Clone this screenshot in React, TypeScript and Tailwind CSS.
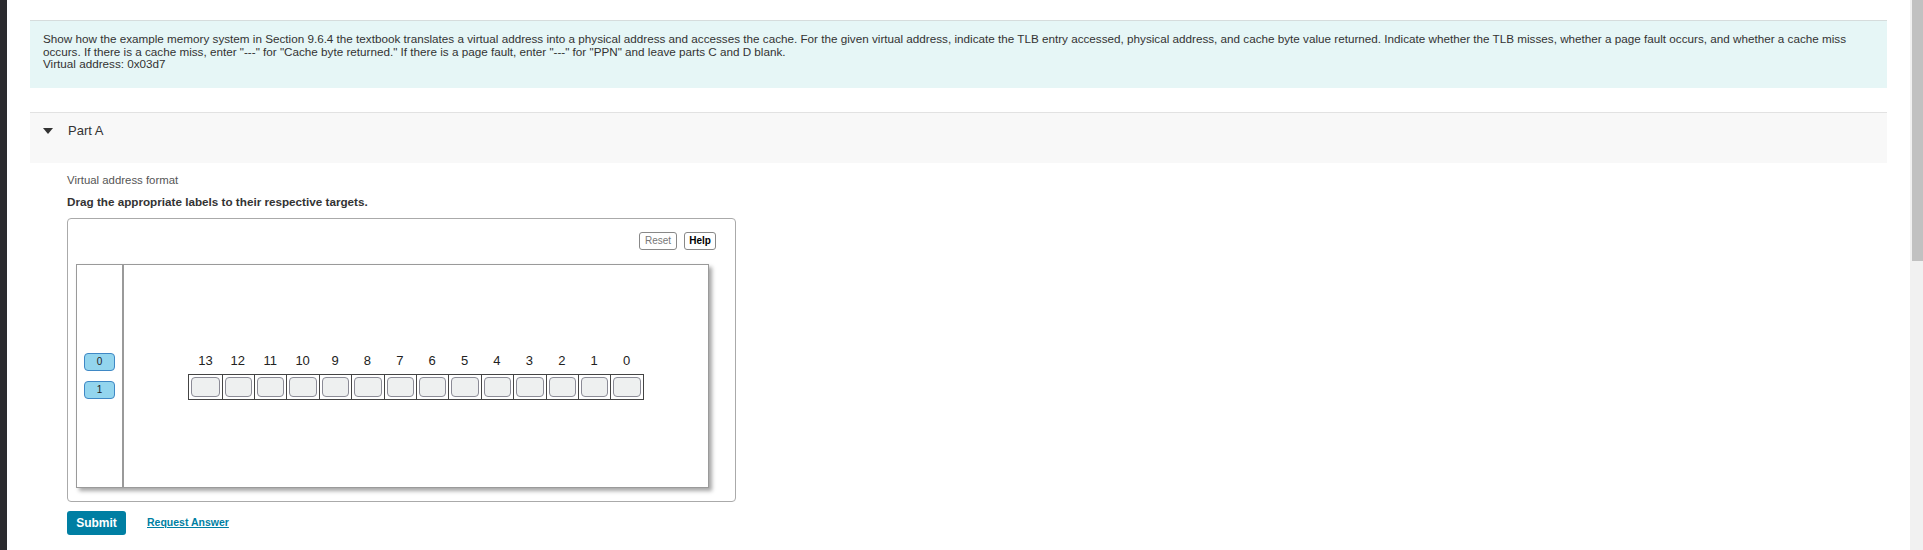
import React from "react";

const bits = [13, 12, 11, 10, 9, 8, 7, 6, 5, 4, 3, 2, 1, 0];

const font = { fontFamily: '"Liberation Sans", Arial, sans-serif' };

function BitCell() {
  return (
    <div className="h-[24px] w-[32.4px] border-l border-[#444] p-[2px] first:border-l-0">
      <div className="h-full w-full rounded-[4px] border border-[#8b8b96] bg-[#eef0f0]" />
    </div>
  );
}

function Tag({ label }: { label: string }) {
  return (
    <div className="flex h-[18px] w-[31px] items-center justify-center rounded-[4px] border border-[#3f88c5] bg-[#93d5ee] text-[10px] text-[#222]">
      {label}
    </div>
  );
}

export default function App() {
  return (
    <div className="flex min-h-[550px] bg-white text-[#333]" style={font}>
      <div className="w-[7px] shrink-0 bg-[#2b2b2f]" />

      <main className="flex-1 px-[23px] pt-5">
        <div className="border-t border-[#d6dcdc] bg-[#e6f6f6] pl-[13px] pr-6 pt-[12px] pb-[17px] text-[11.7px] leading-[12.5px] text-[#333]">
          <p>
            Show how the example memory system in Section 9.6.4 the textbook translates a virtual address into a
            physical address and accesses the cache. For the given virtual address, indicate the TLB entry accessed,
            physical address, and cache byte value returned. Indicate whether the TLB misses, whether a page fault
            occurs, and whether a cache miss occurs. If there is a cache miss, enter "---" for "Cache byte returned."
            If there is a page fault, enter "---" for "PPN" and leave parts C and D blank.
          </p>
          <p>Virtual address: 0x03d7</p>
        </div>

        <section className="mt-6">
          <div className="flex h-[51px] items-start border-t border-[#e2e2e2] bg-[#f8f8f8] pl-[13px] pt-[10px]">
            <svg width="10" height="6" viewBox="0 0 10 6" className="mr-[15px] mt-[5px]">
              <path d="M0 0 L10 0 L5 6 Z" fill="#333" />
            </svg>
            <span className="text-[13px] leading-[16px] text-[#333]">Part A</span>
          </div>

          <div className="pl-[37px] pt-[10px]">
            <p className="text-[11.4px] leading-[14px] text-[#555]">Virtual address format</p>
            <p className="mt-[8px] text-[11.7px] font-bold leading-[14px] text-[#333]">
              Drag the appropriate labels to their respective targets.
            </p>

            <div className="mt-[9px] h-[284px] w-[669px] rounded-[4px] border border-[#aaa] pl-[8px] pt-[13px]">
              <div className="flex justify-end gap-[7px] pr-[19px]">
                <button className="h-[18px] w-[38px] rounded-[3px] border border-[#888] bg-white text-[10px] text-[#777]">
                  Reset
                </button>
                <button className="h-[18px] w-[32px] rounded-[3px] border border-[#888] bg-white text-[10px] font-bold text-black">
                  Help
                </button>
              </div>

              <div className="mt-[14px] flex h-[224px] w-[633px] border border-[#9a9a9a] bg-white shadow-[3px_3px_4px_rgba(0,0,0,0.35)]">
                <div className="flex w-[47px] flex-col items-center justify-center gap-[10px] border-r-2 border-[#9a9a9a]">
                  <Tag label="0" />
                  <Tag label="1" />
                </div>
                <div className="flex flex-1 flex-col items-center justify-center pt-[2px]">
                  <div className="flex">
                    {bits.map((b) => (
                      <div key={b} className="w-[32.4px] text-center text-[13px] leading-[14px] text-[#222]">
                        {b}
                      </div>
                    ))}
                  </div>
                  <div className="mt-[6px] flex border border-[#444]">
                    {bits.map((b) => (
                      <BitCell key={b} />
                    ))}
                  </div>
                </div>
              </div>
            </div>

            <div className="mt-[9px] flex items-center gap-[21px]">
              <button className="h-[24px] w-[59px] rounded-[3px] bg-[#007fa3] text-[12px] font-bold text-white">
                Submit
              </button>
              <a className="text-[10.5px] font-bold text-[#007fa3] underline">Request Answer</a>
            </div>
          </div>
        </section>
      </main>

      <div className="w-[13px] shrink-0 bg-[#f1f1f1] pl-[2px]">
        <div className="h-[261px] w-full bg-[#c1c1c1]" />
      </div>
    </div>
  );
}
